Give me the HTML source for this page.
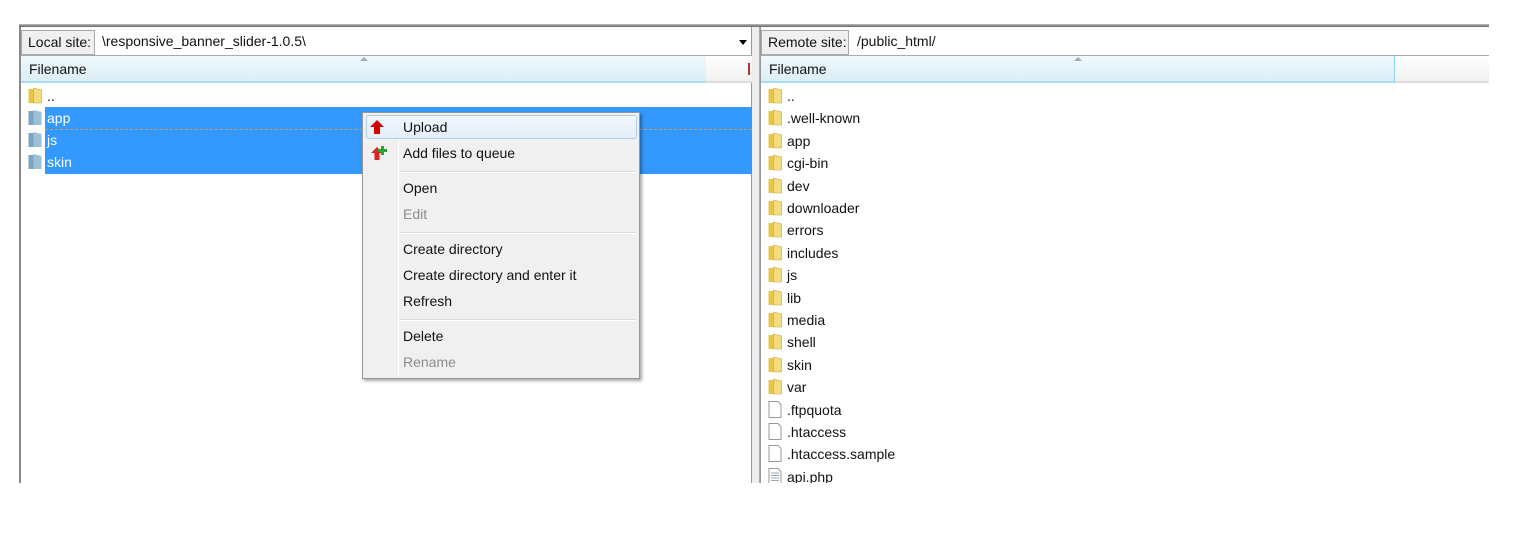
<!DOCTYPE html><html><head><style>
*{margin:0;padding:0;box-sizing:border-box}
body{width:1526px;height:556px;background:#fff;position:relative;overflow:hidden;font-family:"Liberation Sans",sans-serif;font-size:14px;color:#111}
.a{position:absolute}
.lbl{position:absolute;background:#f0f0f0;border:1px solid #a9a9a9;padding:3px 0 0 6px;height:25px}
.hdr{position:absolute;height:27px;background:linear-gradient(#f0f8fc,#dbeef8);border-bottom:2px solid #a9dcf3;padding:5px 0 0 8px}
.row{position:absolute;height:22px;line-height:22px;white-space:nowrap}
.fo{position:absolute;width:16px;height:17px;top:2px;left:0}
.m{position:absolute;left:40px;white-space:nowrap}
.dis{color:#8c8c8c}
.sep{position:absolute;left:36px;right:3px;height:2px;border-top:1px solid #dcdcdc;border-bottom:1px solid #fff}
</style></head><body>
<div class="a" style="left:19px;top:24px;width:1470px;height:3px;background:linear-gradient(#bbb,#666)"></div>
<div class="a" style="left:19px;top:27px;width:733px;height:456px;border-left:2px solid #8a8a8a;border-right:1px solid #999"></div>
<div class="a" style="left:752px;top:27px;width:8px;height:456px;background:#eee;border-right:1px solid #aaa"></div>
<!-- left -->
<div class="lbl" style="left:21px;top:30px;width:74px">Local site:</div>
<div class="a" style="left:102px;top:33px">\responsive_banner_slider-1.0.5\</div>
<div class="a" style="left:739px;top:40px;border-left:4px solid transparent;border-right:4px solid transparent;border-top:5px solid #000"></div>
<div class="a" style="left:21px;top:55px;width:731px;height:1px;background:#aaa"></div>
<div class="hdr" style="left:21px;top:56px;width:685px">Filename</div>
<div class="a" style="left:706px;top:56px;width:46px;height:27px;background:linear-gradient(#fff,#f1f1f1);border-bottom:2px solid #ddd"></div>
<div class="a" style="left:748px;top:63px;width:2px;height:12px;background:#b33"></div>
<div class="a" style="left:360px;top:57px;border-left:4px solid transparent;border-right:4px solid transparent;border-bottom:4px solid #9ab"></div>
<div class="a" style="left:45px;top:107px;width:707px;height:67px;background:#3399ff"></div>
<div class="a" style="left:45px;top:129px;width:707px;height:0;border-top:1px dashed #c97"></div>
<div class="row" style="left:27px;top:85px"><svg class="fo" viewBox="0 0 15 17"><path d="M1 2h5v14H1z" fill="#e8c44a"/><path d="M6 1l8 2v13l-8-0z" fill="#f4db7c" stroke="#c9a43a" stroke-width=".6"/></svg><span style="margin-left:20px">..</span></div>
<div class="row" style="left:27px;top:107px;color:#fff"><svg class="fo" viewBox="0 0 15 17"><path d="M1 2h5v14H1z" fill="#7ba5c0"/><path d="M6 1l8 2v13l-8-0z" fill="#9cc1d6"/></svg><span style="margin-left:20px">app</span></div>
<div class="row" style="left:27px;top:129px;color:#fff"><svg class="fo" viewBox="0 0 15 17"><path d="M1 2h5v14H1z" fill="#7ba5c0"/><path d="M6 1l8 2v13l-8-0z" fill="#9cc1d6"/></svg><span style="margin-left:20px">js</span></div>
<div class="row" style="left:27px;top:151px;color:#fff"><svg class="fo" viewBox="0 0 15 17"><path d="M1 2h5v14H1z" fill="#7ba5c0"/><path d="M6 1l8 2v13l-8-0z" fill="#9cc1d6"/></svg><span style="margin-left:20px">skin</span></div>
<!-- right -->
<div class="a" style="left:760px;top:27px;width:729px;height:456px;border-left:1px solid #999"></div>
<div class="lbl" style="left:761px;top:30px;width:88px">Remote site:</div>
<div class="a" style="left:857px;top:33px">/public_html/</div>
<div class="a" style="left:761px;top:55px;width:728px;height:1px;background:#aaa"></div>
<div class="hdr" style="left:761px;top:56px;width:634px;border-right:1px solid #8fd3f5">Filename</div>
<div class="a" style="left:1395px;top:56px;width:94px;height:27px;background:linear-gradient(#fff,#f1f1f1);border-bottom:2px solid #ddd"></div>
<div class="a" style="left:1074px;top:57px;border-left:4px solid transparent;border-right:4px solid transparent;border-bottom:4px solid #9ab"></div>
<div id="r"></div>
<!-- menu -->
<div class="a" style="left:362px;top:112px;width:278px;height:267px;background:#f0f0f0;border:1px solid #979797;box-shadow:2px 2px 3px rgba(0,0,0,.35)">
<div class="a" style="left:35px;top:2px;width:1px;bottom:2px;background:#e2e2e2;border-right:1px solid #fff"></div>
<div class="a" style="left:3px;top:2px;width:271px;height:24px;border:1px solid #aeccee;border-radius:3px;background:linear-gradient(#f2f7fd,#e4eefa)"></div>
<svg class="a" style="left:6px;top:6px" width="16" height="16" viewBox="0 0 16 16"><path d="M8 1L15 8H11V15H5V8H1Z" fill="#d40000"/></svg>
<svg class="a" style="left:6px;top:32px" width="18" height="16" viewBox="0 0 18 16"><path d="M8 2L14 8H10.5V15H5.5V8H2Z" fill="#d40000" opacity=".85"/><path d="M12 1h3v3h3v3h-3v3h-3V7H9V4h3z" fill="#2aa52a"/></svg>
<div class="m" style="top:6px">Upload</div>
<div class="m" style="top:32px">Add files to queue</div>
<div class="sep" style="top:58px"></div>
<div class="m" style="top:67px">Open</div>
<div class="m dis" style="top:93px">Edit</div>
<div class="sep" style="top:119px"></div>
<div class="m" style="top:128px">Create directory</div>
<div class="m" style="top:154px">Create directory and enter it</div>
<div class="m" style="top:180px">Refresh</div>
<div class="sep" style="top:206px"></div>
<div class="m" style="top:215px">Delete</div>
<div class="m dis" style="top:241px">Rename</div>
</div>
<div class="a" style="left:0;top:483px;width:1526px;height:73px;background:#fff"></div>
<script>
var f=["..",".well-known","app","cgi-bin","dev","downloader","errors","includes","js","lib","media","shell","skin","var"],fl=[".ftpquota",".htaccess",".htaccess.sample","api.php"],h="";
var y=85;
f.forEach(function(n){h+='<div class="row" style="left:767px;top:'+y+'px"><svg class="fo" viewBox="0 0 15 17"><path d="M1 2h5v14H1z" fill="#e8c44a"/><path d="M6 1l8 2v13l-8-0z" fill="#f4db7c" stroke="#c9a43a" stroke-width=".6"/></svg><span style="margin-left:20px">'+n+'</span></div>';y+=22.4;});
fl.forEach(function(n,i){h+='<div class="row" style="left:767px;top:'+y+'px"><svg class="fo" viewBox="0 0 15 17"><path d="M1.5 .5h9l3 3v13h-12z" fill="#fff" stroke="#999"/>'+(i==3?'<path d="M3.5 5h8M3.5 7.5h8M3.5 10h8M3.5 12.5h8" stroke="#9ab"/>':'')+'</svg><span style="margin-left:20px">'+n+'</span></div>';y+=22.4;});
document.getElementById("r").outerHTML=h;
</script>
</body></html>
